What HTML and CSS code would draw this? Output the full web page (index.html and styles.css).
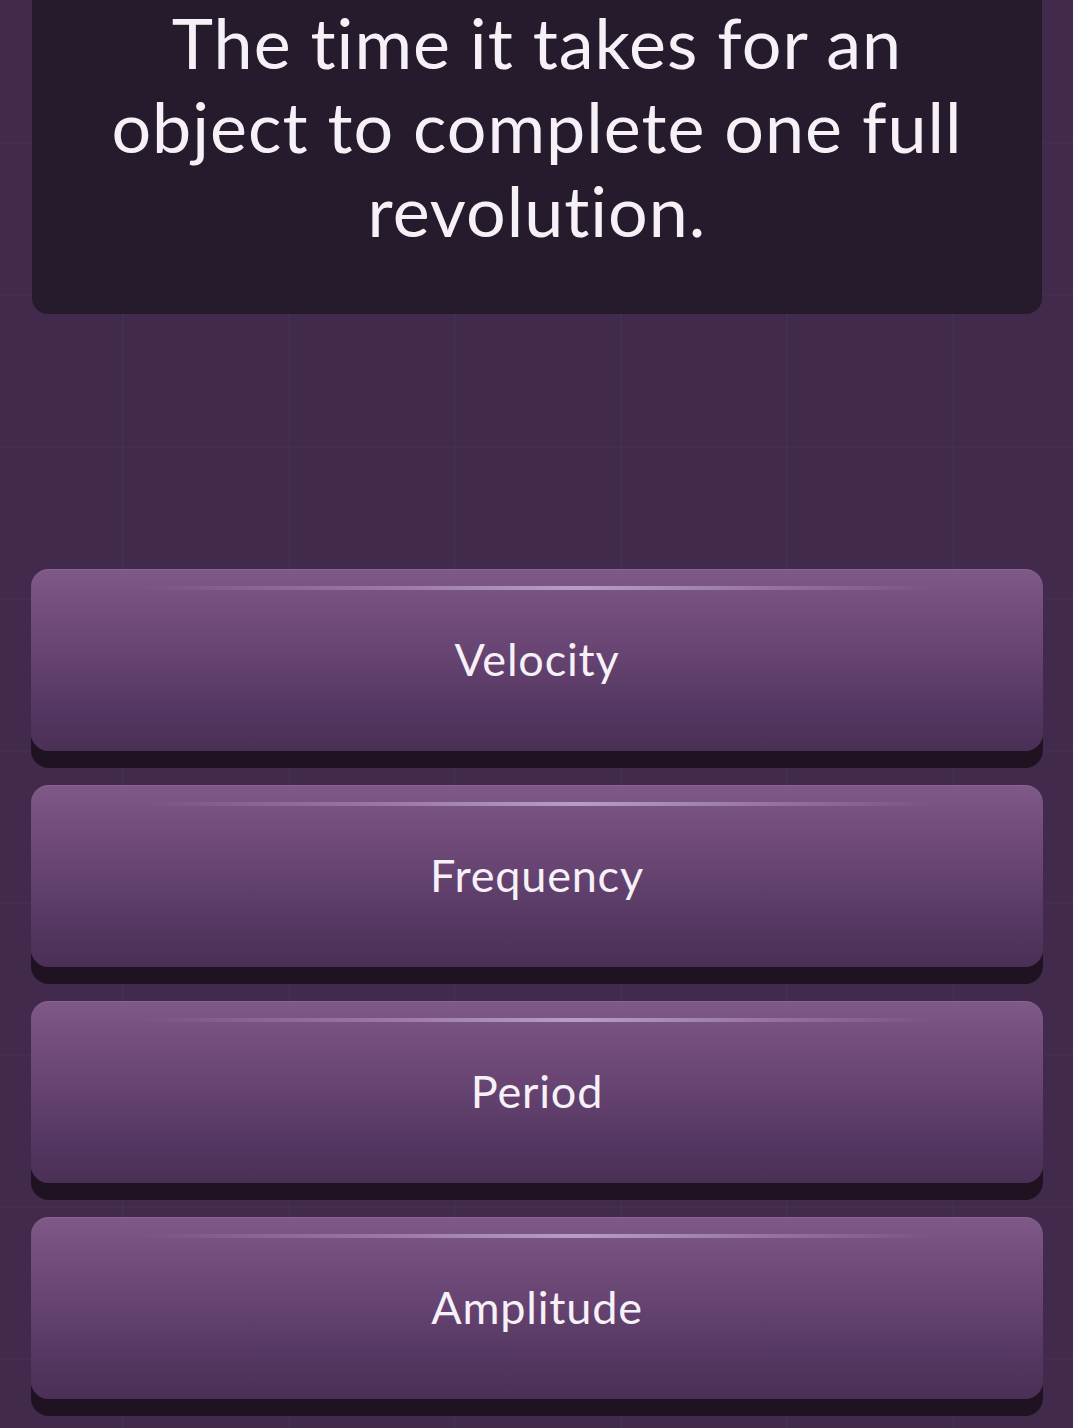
FILE: index.html
```html
<!DOCTYPE html>
<html lang="en">
<head>
  <meta charset="UTF-8" />
  <meta name="viewport" content="width=device-width, initial-scale=1.0"/>
  <title>Quiz</title>
  <link rel="stylesheet" href="styles.css">
</head>
<body>
  <div class="screen">
    <div class="question">
      <p>The time it takes for an object to complete one full revolution.</p>
    </div>

    <div class="answers">
      <button class="answer">Velocity</button>
      <button class="answer">Frequency</button>
      <button class="answer">Period</button>
      <button class="answer">Amplitude</button>
    </div>
  </div>
</body>
</html>
```

FILE: styles.css
```css
body {
  margin: 0;
  font-family: Lato, "Noto Sans", sans-serif;
  color: #f6f0f7;
  background-color: #412a4c;
  background-image:
    linear-gradient(90deg, rgba(255,255,255,0.025) 2px, transparent 2px),
    linear-gradient(0deg, rgba(255,255,255,0.015) 2px, transparent 2px);
  background-size: 166px 152px;
  background-position: -44px -8px;
}

.screen {
  padding: 0 30px 0 31px;
  height: 1428px;
  overflow: hidden;
}

.question {
  display: flow-root;
  margin: 0 1px;
  background: #261b2c;
  border-radius: 0 0 16px 16px;
  height: 314px;
  box-sizing: border-box;
  padding: 0 60px;
  text-align: center;
}

.question p {
  margin: 0;
  font-size: 70px;
  line-height: 84px;
  letter-spacing: 1px;
}

.answers {
  margin-top: 255px;
  display: flex;
  flex-direction: column;
  gap: 34px;
}

.answer {
  position: relative;
  height: 182px;
  padding: 0 0 3px;
  border: none;
  border-radius: 18px;
  font-family: inherit;
  font-size: 45px;
  letter-spacing: 0.8px;
  color: #f6f0f7;
  background: linear-gradient(180deg, #7f5a88 0%, #724d7b 25%, #654270 50%, #573963 72%, #4a2f56 100%);
  box-shadow: inset 0 1px 0 rgba(255,255,255,0.08), 0 17px 0 #1f1321;
  cursor: pointer;
}

.answer::before {
  content: "";
  position: absolute;
  top: 17px;
  left: 110px;
  right: 110px;
  height: 4px;
  border-radius: 2px;
  background: linear-gradient(90deg, rgba(190,160,205,0) 0%, rgba(190,160,205,0.55) 35%, rgba(200,175,215,0.8) 55%, rgba(190,160,205,0.4) 80%, rgba(190,160,205,0) 100%);
}
```
